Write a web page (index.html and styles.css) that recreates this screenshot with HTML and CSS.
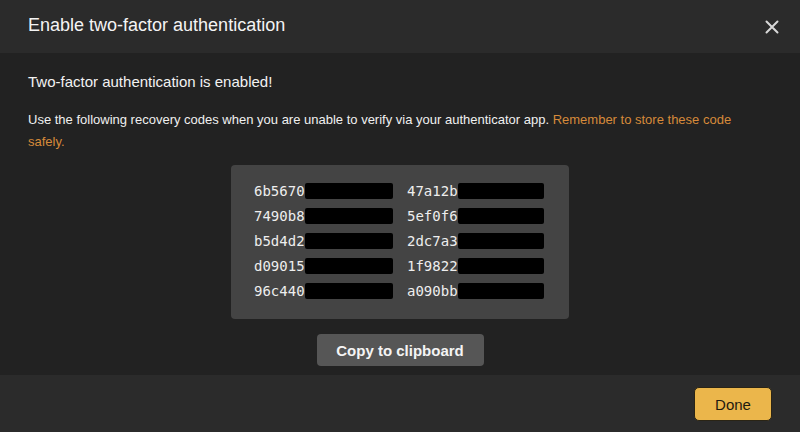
FILE: index.html
```html
<!DOCTYPE html>
<html>
<head>
<meta charset="utf-8">
<link rel="stylesheet" href="styles.css">
</head>
<body>
<div class="modal">
  <header class="modal-header">
    <h1 class="title">Enable two-factor authentication</h1>
    <button class="close" aria-label="Close">
      <svg width="14" height="14" viewBox="0 0 14 14"><path d="M1.5 1.5 L12.5 12.5 M12.5 1.5 L1.5 12.5" stroke="#d8d8d8" stroke-width="2" stroke-linecap="round"/></svg>
    </button>
  </header>
  <main class="modal-body">
    <p class="lead">Two-factor authentication is enabled!</p>
    <p class="info">Use the following recovery codes when you are unable to verify via your authenticator app. <span class="warn">Remember to store these code safely.</span></p>
    <div class="codes-wrap">
      <div class="codes">
        <div class="code"><span>6b5670</span><i class="redact r1"></i></div>
        <div class="code"><span>47a12b</span><i class="redact r2"></i></div>
        <div class="code"><span>7490b8</span><i class="redact r1"></i></div>
        <div class="code"><span>5ef0f6</span><i class="redact r2"></i></div>
        <div class="code"><span>b5d4d2</span><i class="redact r1"></i></div>
        <div class="code"><span>2dc7a3</span><i class="redact r2"></i></div>
        <div class="code"><span>d09015</span><i class="redact r1"></i></div>
        <div class="code"><span>1f9822</span><i class="redact r2"></i></div>
        <div class="code"><span>96c440</span><i class="redact r1"></i></div>
        <div class="code"><span>a090bb</span><i class="redact r2"></i></div>
      </div>
    </div>
    <div class="copy-row"><button class="copy">Copy to clipboard</button></div>
  </main>
  <footer class="modal-footer">
    <button class="done">Done</button>
  </footer>
</div>
</body>
</html>
```
FILE: styles.css
```css
* { box-sizing: border-box; }
html, body { margin: 0; padding: 0; }
body {
  width: 800px;
  height: 432px;
  background: #222222;
  font-family: "Liberation Sans", Arial, sans-serif;
  color: #f2f2f2;
  overflow: hidden;
}
.modal { display: flex; flex-direction: column; height: 432px; }
.modal-header {
  height: 53px;
  background: #2b2b2b;
  display: flex;
  align-items: center;
  justify-content: space-between;
  padding: 0 21px 0 28px;
}
.title {
  margin: 0;
  font-size: 18px;
  font-weight: 400;
  color: #f4f4f4;
  padding-bottom: 2px;
}
.close {
  background: none;
  border: 0;
  padding: 0;
  width: 14px;
  height: 14px;
  display: flex;
  cursor: pointer;
}
.modal-body {
  flex: 1;
  background: #222222;
  padding: 19px 28px 0 28px;
}
.lead {
  margin: 0;
  font-size: 15px;
  line-height: 20px;
  color: #f2f2f2;
}
.info {
  margin: 17px 0 0 0;
  max-width: 730px;
  font-size: 13px;
  line-height: 22px;
  color: #f0f0f0;
}
.warn { color: #d68a3a; }
.codes-wrap { display: flex; justify-content: center; margin-top: 12px; }
.codes {
  width: 338px;
  background: #444444;
  border-radius: 4px;
  padding: 13px 0 0 23px;
  height: 154px;
  display: grid;
  grid-template-columns: 153px 153px;
  grid-auto-rows: 25px;
  align-content: start;
}
.code {
  display: flex;
  align-items: center;
  font-family: "DejaVu Sans Mono", monospace;
  font-size: 14px;
  color: #eeeeee;
  height: 25px;
}
.redact {
  display: block;
  background: #000;
  height: 16px;
  border-radius: 2px;
}
.r1 { width: 88px; }
.r2 { width: 86px; }
.copy-row { display: flex; justify-content: center; margin-top: 15px; }
.copy {
  width: 167px;
  height: 32px;
  background: #565656;
  border: 0;
  border-radius: 4px;
  color: #f4f4f4;
  font-family: "Liberation Sans", Arial, sans-serif;
  font-size: 15px;
  font-weight: 700;
  padding: 0;
}
.modal-footer {
  height: 57px;
  background: #2b2b2b;
  display: flex;
  justify-content: flex-end;
  align-items: flex-start;
  padding: 12px 28px 0 0;
}
.done {
  width: 78px;
  height: 34px;
  background: #ebb64b;
  border: 1px solid #2a2415;
  border-radius: 5px;
  color: #1e1a10;
  font-family: "Liberation Sans", Arial, sans-serif;
  font-size: 15px;
  font-weight: 500;
  padding: 0;
}
```
